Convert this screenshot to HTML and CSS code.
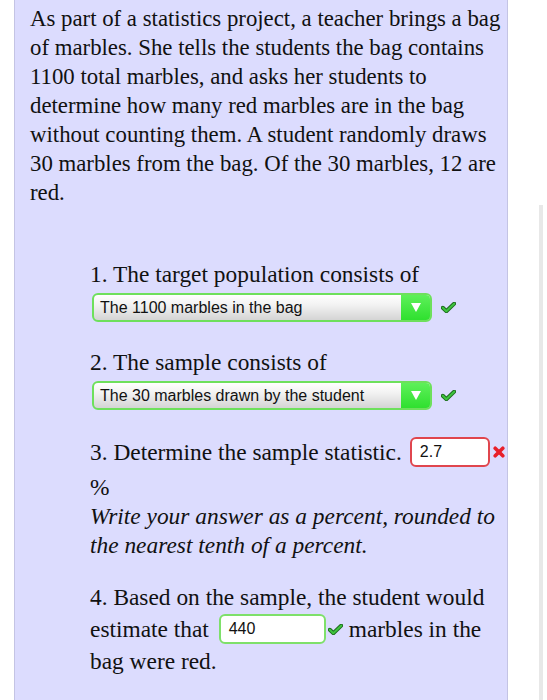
FILE: index.html
```html
<!DOCTYPE html>
<html>
<head>
<meta charset="utf-8">
<link rel="stylesheet" href="styles.css">
</head>
<body>
<div class="panel">
  <p class="intro">As part of a statistics project, a teacher brings a bag of marbles. She tells the students the bag contains 1100 total marbles, and asks her students to determine how many red marbles are in the bag without counting them. A student randomly draws 30 marbles from the bag. Of the 30 marbles, 12 are red.</p>

  <div class="parts">
    <div class="part p1">
      <div class="q">1. The target population consists of</div>
      <div class="row">
        <div class="select"><span class="sel-text">The 1100 marbles in the bag</span><span class="sel-btn"><span class="tri"></span></span></div>
        <svg class="check" width="15" height="11" viewBox="0 0 16 12"><path d="M1.8 6.3 L5.6 10 L14.2 1.8" fill="none" stroke="#1e6b1e" stroke-width="4.4" stroke-linecap="round" stroke-linejoin="round"/><path d="M1.8 6.3 L5.6 10 L14.2 1.8" fill="none" stroke="#3ec43e" stroke-width="2.2" stroke-linecap="round" stroke-linejoin="round"/></svg>
      </div>
    </div>

    <div class="part p2">
      <div class="q">2. The sample consists of</div>
      <div class="row">
        <div class="select"><span class="sel-text">The 30 marbles drawn by the student</span><span class="sel-btn"><span class="tri"></span></span></div>
        <svg class="check" width="15" height="11" viewBox="0 0 16 12"><path d="M1.8 6.3 L5.6 10 L14.2 1.8" fill="none" stroke="#1e6b1e" stroke-width="4.4" stroke-linecap="round" stroke-linejoin="round"/><path d="M1.8 6.3 L5.6 10 L14.2 1.8" fill="none" stroke="#3ec43e" stroke-width="2.2" stroke-linecap="round" stroke-linejoin="round"/></svg>
      </div>
    </div>

    <div class="part p3">
      <div class="q3"><span class="q3-text">3. Determine the sample statistic.</span><span class="input bad">2.7</span><svg class="cross" width="12" height="12" viewBox="0 0 12 12"><path d="M2.2 2.2 L9.8 9.8 M9.8 2.2 L2.2 9.8" stroke="#e8202a" stroke-width="3.6" stroke-linecap="round"/></svg></div>
      <div class="line pct">%</div>
      <div class="line hint">Write your answer as a percent, rounded to the nearest tenth of a percent.</div>
    </div>

    <div class="part p4">
      <div class="line">4. Based on the sample, the student would</div>
      <div class="q4">estimate that <span class="input good">440</span><svg class="check small" width="15" height="11" viewBox="0 0 16 12"><path d="M1.8 6.3 L5.6 10 L14.2 1.8" fill="none" stroke="#1e6b1e" stroke-width="4.4" stroke-linecap="round" stroke-linejoin="round"/><path d="M1.8 6.3 L5.6 10 L14.2 1.8" fill="none" stroke="#3ec43e" stroke-width="2.2" stroke-linecap="round" stroke-linejoin="round"/></svg>marbles in the</div>
      <div class="line last">bag were red.</div>
    </div>
  </div>
</div>
<div class="scroll"></div>
</body>
</html>
```

FILE: styles.css
```css
html, body {
  margin: 0;
  padding: 0;
  background: #ffffff;
}
body {
  width: 547px;
  height: 700px;
  overflow: hidden;
  position: relative;
  font-family: "Liberation Serif", "Times New Roman", serif;
  color: #111111;
}
.panel {
  margin: -2px 0 0 14px;
  width: 494px;
  height: 720px;
  background: #dcdcfe;
  border: 1px solid #c4c4e4;
  padding: 0 0 0 15px;
  box-sizing: border-box;
}
.intro {
  margin: 0;
  padding-top: 5px;
  font-size: 22.8px;
  line-height: 29px;
  padding-right: 3px;
}
.parts {
  padding-left: 60px;
  font-size: 23.4px;
  line-height: 29px;
}
.p1 { margin-top: 53px; }
.p2 { margin-top: 26px; }
.p3 { margin-top: 27px; }
.p4 { margin-top: 23px; }
.row {
  display: flex;
  align-items: center;
  margin-top: 4px;
  height: 29px;
}
.select {
  width: 340px;
  height: 29px;
  box-sizing: border-box;
  border: 2px solid #6ee05c;
  border-radius: 6px;
  background: linear-gradient(#ffffff, #f2f2f2 40%, #d4d4d4);
  display: flex;
  align-items: center;
  overflow: hidden;
  margin-left: 2px;
}
.sel-text {
  flex: 1;
  font-family: "Liberation Sans", Arial, sans-serif;
  font-size: 16px;
  color: #111;
  padding-left: 6px;
  line-height: 25px;
}
.sel-btn {
  width: 29px;
  height: 100%;
  background: linear-gradient(#5ef05a, #2fe02f);
  display: flex;
  align-items: center;
  justify-content: center;
}
.tri {
  width: 0;
  height: 0;
  border-left: 5px solid transparent;
  border-right: 5px solid transparent;
  border-top: 9px solid #ffffff;
}
.check {
  margin-left: 9px;
  flex-shrink: 0;
}
.q3 {
  display: flex;
  align-items: center;
  height: 30px;
  white-space: nowrap;
}
.q3-text {
  flex-shrink: 0;
}
.input {
  display: inline-block;
  box-sizing: border-box;
  height: 30px;
  border-radius: 6px;
  background: #ffffff;
  font-family: "Liberation Sans", Arial, sans-serif;
  font-size: 16px;
  line-height: 26px;
  padding-left: 8px;
  color: #111;
  flex-shrink: 0;
}
.input.bad {
  width: 80px;
  border: 2px solid #e0464e;
  margin-left: 8px;
}
.input.good {
  width: 107px;
  border: 2px solid #7ee06a;
  margin-left: 4px;
}
.cross {
  margin-left: 3px;
  flex-shrink: 0;
}
.line {
  line-height: 29px;
}
.pct { margin-top: 6px; }
.hint {
  font-style: italic;
}
.q4 {
  display: flex;
  align-items: center;
  height: 30px;
  margin-top: 2px;
  white-space: pre;
}
.check.small {
  margin-left: 2px;
  margin-right: 6px;
}
.last { margin-top: 3px; }
.scroll {
  position: absolute;
  left: 539px;
  top: 205px;
  width: 4px;
  height: 495px;
  background: #e8e8e8;
}
```
